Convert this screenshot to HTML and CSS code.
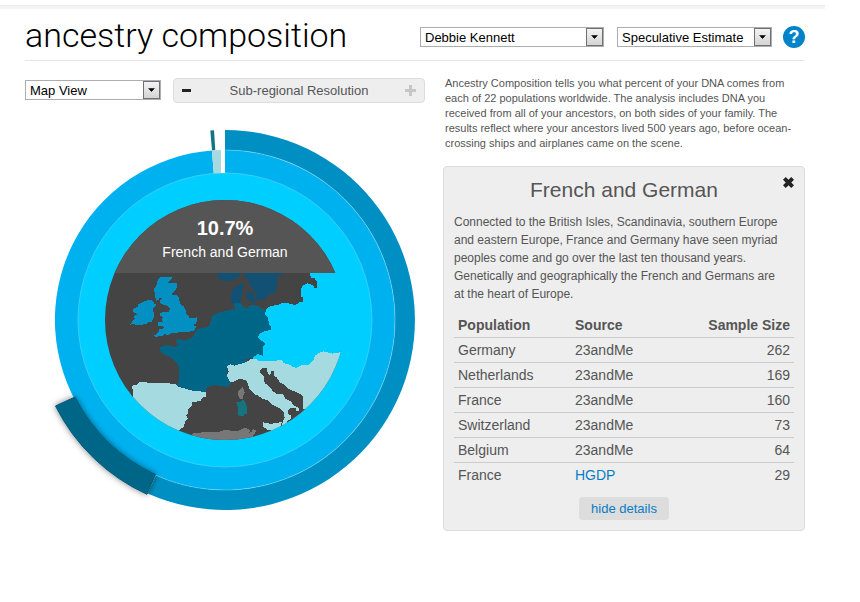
FILE: index.html
```html
<!DOCTYPE html>
<html lang="en">
<head>
<meta charset="utf-8">
<title>Ancestry Composition</title>
<link rel="stylesheet" href="styles.css">
</head>
<body>
<div class="top-strip"></div>
<div class="page">
  <header class="header">
    <h1 class="title">ancestry composition</h1>
    <div class="header-tools">
      <div class="select profile-select">
        <select aria-label="Profile"><option>Debbie Kennett</option></select>
        <svg class="select-arrow" viewBox="0 0 17 18" aria-hidden="true"><path d="M5 7h7v1h-1v1h-1v1h-1v1h-1v-1h-1v-1h-1v-1h-1z"/></svg>
      </div>
      <div class="select estimate-select">
        <select aria-label="Estimate"><option>Speculative Estimate</option></select>
        <svg class="select-arrow" viewBox="0 0 17 18" aria-hidden="true"><path d="M5 7h7v1h-1v1h-1v1h-1v1h-1v-1h-1v-1h-1v-1h-1z"/></svg>
      </div>
      <button class="help" type="button" aria-label="Help">?</button>
    </div>
  </header>

  <main class="columns">
    <section class="left">
      <div class="controls">
        <div class="select view-select">
          <select aria-label="View"><option>Map View</option></select>
          <svg class="select-arrow" viewBox="0 0 17 18" aria-hidden="true"><path d="M5 7h7v1h-1v1h-1v1h-1v1h-1v-1h-1v-1h-1v-1h-1z"/></svg>
        </div>
        <div class="resolution">
          <button class="step" type="button" aria-label="Less detail"><svg viewBox="0 0 11 11"><path fill="#222" d="M0 4h9v3H0z"/></svg></button>
          <span>Sub-regional Resolution</span>
          <button class="step" type="button" aria-label="More detail"><svg viewBox="0 0 11 11"><path fill="#c6c6c6" d="M4 0h3v4h4v3H7v4H4V7H0V4h4z"/></svg></button>
        </div>
      </div>
      <svg class="chart" viewBox="25 120 400 400" role="img" aria-label="Ancestry ring chart around a map of Europe">
        <defs>
          <clipPath id="globe"><circle cx="225" cy="320" r="120"/></clipPath>
          <clipPath id="cap"><rect x="100" y="195" width="250" height="78"/></clipPath>
          <filter id="shadow" x="-20%" y="-20%" width="140%" height="140%">
            <feDropShadow dx="0" dy="0" stdDeviation="3" flood-color="#000" flood-opacity=".5"/>
          </filter>
        </defs>
        <!-- outer ring -->
        <path fill="#008fc2" d="M225 130A190 190 0 1 1 147.700 493.600L155.900 475.300A170 170 0 1 0 225 150Z"/>
        <path fill="#147480" d="M210.300 130.600L214 130.300L215.300 150.300L212 150.500Z"/>
        <!-- middle ring -->
        <path fill="#00b1f0" d="M225 150A170 170 0 1 1 211.900 150.500L213.800 173.400L225 173Z"/>
        <path fill="#a5dbe0" d="M211.900 150.500L221 150V173H213.800Z"/>
        <!-- inner ring -->
        <circle cx="225" cy="320" r="147" fill="#00ceff"/>
        <g fill="none" stroke="#7fdcfb" stroke-width="1" opacity=".45">
          <circle cx="225" cy="320" r="147"/>
          <path d="M225 150A170 170 0 1 1 155.900 475.300"/>
        </g>
        <path fill="#fff" d="M221 149h4v24h-4z"/>
        <!-- selected slice -->
        <path fill="#006688" stroke="#00597a" stroke-width="1" filter="url(#shadow)" d="M55.500 406L75 397A168 168 0 0 0 155.500 474.500L147 494.300A190 190 0 0 1 55.500 406Z"/>
        <!-- globe -->
        <g clip-path="url(#globe)">
          <path fill="#444" d="M100 195h250v250H100z"/>
          <g shape-rendering="crispEdges">
            <g transform="translate(220 260) scale(.3333333)">
              <path fill="#00ceff" d="M269 36V45L275 54L284 53V60L291 63V84H282L280 77L272 73L262 70L250 76L243 85V110H248V125H240L228 134L208 133L205 128L187 129L175 134L150 139L135 150L100 160V310L180 315L220 335L300 325L390 290V36Z"/>
              <path fill="#125074" d="M-12 36H62L60 47L44 58L30 63L10 62L-5 53ZM72 36H190V42L177 47L172 56V75L166 90L164 102L148 103L138 114L134 119L112 120L107 112L110 102L103 95L96 82L88 70L83 56L72 47ZM36 90L50 78L60 76L70 68L72 79L64 93L68 101L64 110L62 130L41 133L34 124V98ZM77 97L88 99L92 92L104 101L98 107L108 112L104 118V128H97L88 124V117L77 112Z"/>
            </g>
            <path fill="#006688" d="M220 312L227 311L232 309L235 311L234 303H241L243 307L247 308L252 305L258 306L262 309L266 310L265 315L268 317L269 324L271 327V330L265 331L259 334L258 338L262 341L265 344L263 347V356L258 354L252 358L245 359L247 362L238 366L230 366L227 369L228 380L231 383L228 387L215 385L207 387L206 392L195 391L186 389L177 386L179 378V367L175 361L170 357L163 354L160 351V347L167 345L173 347L178 346L176 340L180 339L184 341L193 337L195 333L197 329L207 327L210 324L212 316L218 313Z"/>
            <g transform="translate(100 260) scale(.3333333)" fill="#0290c3">
              <path d="M181 51H215V57L206 64L203 70H231L229 88L220 96L215 104H230L236 112L239 124L242 134L252 140L257 150L258 158L262 166L268 168L267 175L291 172V185L287 191L279 195L288 199L286 207L280 213L262 216H240L232 218L214 220L204 225L194 223L190 227L178 228L168 233L163 226L176 217L178 208L193 205L188 197H173V185H188L186 175L190 172L180 167V158L208 156L209 146L200 137L186 133L178 126L181 120L187 117L179 112L177 119L168 123L165 104L162 88L172 70V63Z"/>
              <path d="M150 119L160 124L161 130L168 134L165 142L158 144L160 156L163 164L161 174L155 185L147 186L140 191L128 194L120 196H108L102 192L90 194L100 181L105 177L101 168L112 164L107 158L98 157L101 146L113 141L114 134L132 125L142 121Z"/>
            </g>
            <g transform="translate(120 350) scale(.3333333)">
              <path fill="#a5dbe0" d="M320 48L330 43L345 47L355 43L370 40L380 36L390 28L410 27L416 33L450 34L485 30L492 40L512 45L518 52L530 53L540 47L568 44L580 32L584 18L598 8L610 4L625 8L638 11L664 6L700 0V260H500L485 237L488 215L494 204L490 185L478 174L455 163L445 152L425 145L415 137L402 132L388 115L380 92L360 86L346 92L333 98L326 88L320 75L326 65Z"/>
              <path fill="#444" d="M420 67L421 59L430 53H440V62L443 68L450 76L454 64H461V76L471 83L479 97L497 107L505 117L530 127L550 138V178H556L540 215L500 245L488 238L499 224L500 213L514 206V197L502 190L504 181L514 173L527 175L529 184L538 183V174L520 165L514 155L495 145L490 133L470 131L459 125L450 111L434 99L431 79Z"/>
              <path fill="#a5dbe0" d="M34 108L52 103L59 94L72 97L102 99L165 101L172 109L205 119L219 122L240 124L258 127V140L246 144L241 153L217 157L215 167L205 177V190L198 195L203 205L195 216L192 230L175 242L165 260L50 250L0 160L39 142V120ZM430 217L440 220L455 221L485 216L481 229L486 241L475 260L462 243L445 240L428 230Z"/>
              <path fill="#777" d="M362 117L369 110L371 119L375 128L369 138L370 146L363 149L356 140L353 129L356 121ZM217 252L225 248L240 250L246 246H285L300 245L312 240L350 243L362 240L370 234L386 236L390 244L385 252L395 245L400 238L408 241L404 251L399 255L402 290H180Z"/>
              <path fill="#147480" d="M347 155L359 156L370 150L378 160L376 166L381 171V190L373 193L370 198L360 199L354 193V170Z"/>
            </g>
          </g>
        </g>
        <!-- joins the eastern region to the inner ring -->
        <path fill="none" stroke="#00ceff" stroke-width="4" d="M335 273A119.500 119.500 0 0 1 340.800 350"/>
        <circle cx="225" cy="320" r="120" fill="#555" clip-path="url(#cap)"/>
        <text class="percent" x="225" y="235">10.7%</text>
        <text class="region" x="225" y="257">French and German</text>
      </svg>
    </section>

    <section class="right">
      <p class="intro">Ancestry Composition tells you what percent of your DNA comes from<br>each of 22 populations worldwide. The analysis includes DNA you<br>received from all of your ancestors, on both sides of your family. The<br>results reflect where your ancestors lived 500 years ago, before ocean-<br>crossing ships and airplanes came on the scene.</p>
      <article class="panel">
        <button class="close" type="button" aria-label="Close"><svg viewBox="0 0 12 12"><path fill="#222" d="M3 0L6 3L9 0L12 3L9 6L12 9L9 12L6 9L3 12L0 9L3 6L0 3Z"/></svg></button>
        <h2>French and German</h2>
        <p class="description">Connected to the British Isles, Scandinavia, southern Europe<br>and eastern Europe, France and Germany have seen myriad<br>peoples come and go over the last ten thousand years.<br>Genetically and geographically the French and Germans are<br>at the heart of Europe.</p>
        <table>
          <thead><tr><th>Population</th><th>Source</th><th>Sample Size</th></tr></thead>
          <tbody>
            <tr><td>Germany</td><td>23andMe</td><td>262</td></tr>
            <tr><td>Netherlands</td><td>23andMe</td><td>169</td></tr>
            <tr><td>France</td><td>23andMe</td><td>160</td></tr>
            <tr><td>Switzerland</td><td>23andMe</td><td>73</td></tr>
            <tr><td>Belgium</td><td>23andMe</td><td>64</td></tr>
            <tr><td>France</td><td><a href="#">HGDP</a></td><td>29</td></tr>
          </tbody>
        </table>
        <button class="hide" type="button">hide details</button>
      </article>
    </section>
  </main>
</div>
</body>
</html>
```
FILE: styles.css
```css
* { box-sizing: border-box; }

body {
  margin: 0;
  padding-top: 5px;
  background: #fff;
  color: #555;
  font-family: "Liberation Sans", Arial, sans-serif;
  font-size: 13px;
}

button, select { font: inherit; }

button {
  border: 0;
  padding: 0;
  background: none;
  cursor: pointer;
}

.top-strip {
  height: 4px;
  margin-right: 35px;
  background: #f4f4f4;
  border-top: 1px solid #ebebeb;
}

.page { padding: 0 55px 0 25px; }

.header {
  display: flex;
  align-items: center;
  justify-content: space-between;
  height: 52px;
  border-bottom: 1px solid #e5e5e5;
}

.title {
  margin: 0;
  color: #000;
  font-family: Roboto, "Liberation Sans", sans-serif;
  font-size: 34px;
  font-weight: 300;
  line-height: 52px;
}

.header-tools {
  display: flex;
  align-items: center;
  padding-top: 5px;
}

.select {
  position: relative;
  height: 20px;
}

.select select {
  display: block;
  width: 100%;
  height: 20px;
  padding: 0 20px 0 4px;
  appearance: none;
  background: #fff;
  border: 1px solid #abadb3;
  border-radius: 0;
  color: #000;
}

.select-arrow {
  position: absolute;
  top: 1px;
  right: 1px;
  width: 17px;
  height: 18px;
  background: linear-gradient(#f3f3f3, #d4d4d4);
  border: 1px solid #707070;
  pointer-events: none;
}

.profile-select { width: 184px; margin-right: 13px; }
.estimate-select { width: 155px; margin-right: 11px; }
.view-select { width: 136px; margin-top: 2px; }

.help {
  width: 22px;
  height: 22px;
  border-radius: 50%;
  background: #0083c9;
  color: #fff;
  font-size: 18px;
  font-weight: bold;
  line-height: 22px;
}

.columns {
  display: grid;
  grid-template-columns: 400fr 362fr;
  gap: 18px;
  align-items: start;
  padding-top: 15px;
}

.controls {
  display: flex;
  align-items: flex-start;
  gap: 12px;
  padding-top: 2px;
}

.resolution {
  display: flex;
  flex: 1;
  align-items: center;
  justify-content: space-between;
  height: 25px;
  padding: 0 8px;
  background: #eee;
  border: 1px solid #ddd;
  border-radius: 4px;
}

.step { width: 11px; height: 13px; }
.step svg { display: block; width: 11px; height: 11px; }

.chart {
  display: block;
  width: 100%;
  margin-top: 17px;
}

.chart text { fill: #fff; text-anchor: middle; }
.percent { font-size: 20px; font-weight: bold; }
.region { font-size: 14px; }

.intro {
  margin: 0 0 15px;
  padding-left: 2px;
  font-size: 11px;
  line-height: 15px;
  white-space: nowrap;
}

.panel {
  position: relative;
  padding: 10px;
  background: #eee;
  border: 1px solid #ddd;
  border-radius: 4px;
}

.panel h2 {
  margin: 0 0 10px;
  font-size: 21px;
  font-weight: normal;
  line-height: 26px;
  text-align: center;
}

.close {
  position: absolute;
  top: 10px;
  right: 10px;
  width: 11px;
  height: 11px;
}

.close svg { display: block; }

.description {
  margin: 0 0 10px;
  font-size: 12px;
  line-height: 18px;
}

table {
  width: 100%;
  border-collapse: collapse;
  font-size: 14px;
  line-height: 16px;
}

th, td {
  padding: 4px;
  text-align: left;
}

th:last-child, td:last-child { text-align: right; }
th:first-child { width: 117px; }

tr + tr, tbody tr { border-top: 1px solid #ccc; }

a { color: #0a7cc4; text-decoration: none; }

.hide {
  display: block;
  height: 23px;
  margin: 10px auto 0;
  padding: 0 12px;
  background: #ddd;
  border-radius: 4px;
  color: #0a7cc4;
}
```
